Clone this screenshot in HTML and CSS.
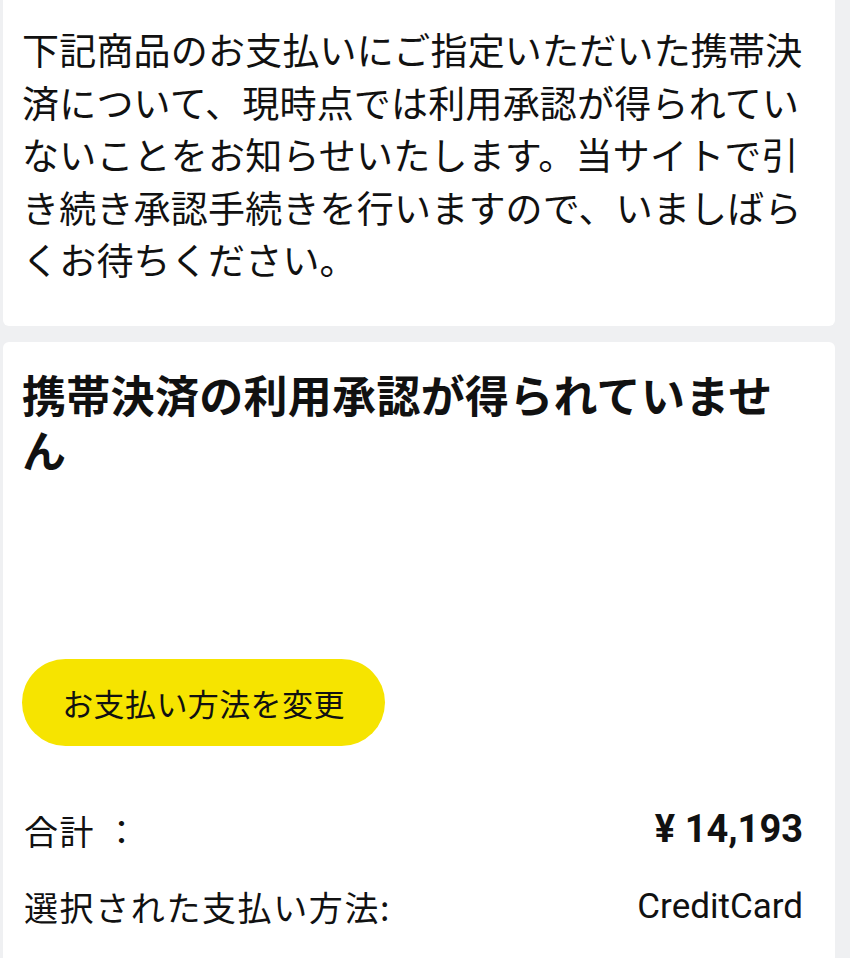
FILE: index.html
```html
<!DOCTYPE html>
<html lang="ja">
<head>
<meta charset="utf-8">
<link rel="stylesheet" href="styles.css">
</head>
<body>
<div class="page">
  <section class="card notice">
    <p class="notice-text">下記商品のお支払いにご指定いただいた携帯決済について、現時点では利用承認が得られていないことをお知らせいたします。当サイトで引き続き承認手続きを行いますので、いましばらくお待ちください。</p>
  </section>
  <section class="card detail">
    <h1 class="title">携帯決済の利用承認が得られていません</h1>
    <button class="change-btn" type="button">お支払い方法を変更</button>
    <div class="row row-total">
      <span class="label">合計 ：</span>
      <span class="value total">¥ 14,193</span>
    </div>
    <div class="row row-method">
      <span class="label">選択された支払い方法:</span>
      <span class="value">CreditCard</span>
    </div>
  </section>
</div>
</body>
</html>
```

FILE: styles.css
```css
html, body {
  margin: 0;
  padding: 0;
  background: #eff0f2;
}
body {
  font-family: "Roboto", "Noto Sans CJK JP", sans-serif;
  color: #111;
  height: 958px;
  overflow: hidden;
}
.page {
  width: 832px;
  margin-left: 3px;
  display: flex;
  flex-direction: column;
  gap: 16px;
}
.card {
  background: #fff;
  border-radius: 6px;
  padding: 0 30px 0 19px;
}
.notice {
  padding-top: 23px;
  padding-bottom: 40px;
  border-radius: 0 0 6px 6px;
}
.notice-text {
  margin: 0;
  font-family: "Noto Sans CJK JP", sans-serif;
  font-size: 37px;
  line-height: 52.5px;
  letter-spacing: 0.2px;
}
.detail {
  padding-top: 25px;
  height: 620px;
  display: flex;
  flex-direction: column;
  align-items: flex-start;
}
.title {
  margin: 0;
  font-family: "Noto Sans CJK JP", sans-serif;
  font-weight: 700;
  font-size: 44px;
  line-height: 55px;
  letter-spacing: 0.3px;
}
.change-btn {
  margin-top: 182px;
  width: 363px;
  height: 87px;
  border: none;
  border-radius: 44px;
  background: #f6e400;
  font-family: "Noto Sans CJK JP", sans-serif;
  font-size: 31px;
  letter-spacing: 0.4px;
  color: #111;
  padding: 0;
}
.row {
  align-self: stretch;
  display: flex;
  justify-content: space-between;
  align-items: center;
  height: 50px;
}
.row-total { margin-top: 60px; }
.row-method { margin-top: 26px; }
.label {
  font-family: "Noto Sans CJK JP", sans-serif;
  font-size: 34px;
  letter-spacing: 1.6px;
  margin-left: 2px;
}
.value {
  font-family: "Roboto", sans-serif;
  font-size: 35px;
  padding-right: 2px;
}
.total {
  font-weight: 700;
  font-size: 38px;
  margin-top: -4px;
}
```
